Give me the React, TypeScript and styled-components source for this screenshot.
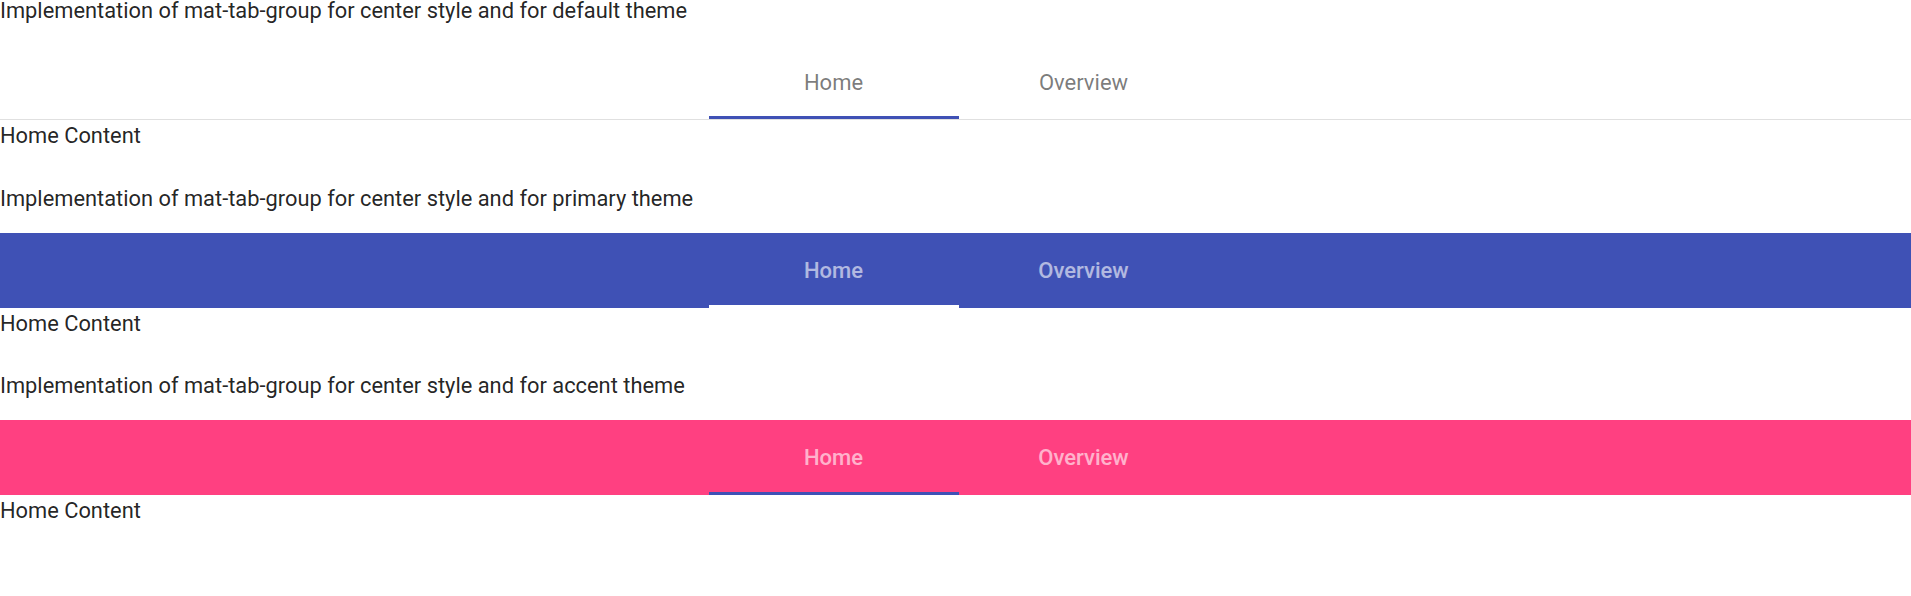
import React, { useState } from "react";
import styled, { createGlobalStyle, css } from "styled-components";

type Theme = "default" | "primary" | "accent";

const GlobalStyle = createGlobalStyle`
  html, body {
    margin: 0;
    padding: 0;
    background: #ffffff;
  }
  body {
    font-family: Roboto, "Helvetica Neue", "Liberation Sans", sans-serif;
    color: rgba(0, 0, 0, 0.87);
    font-size: 21.85px;
  }
`;

const Page = styled.div`
  display: flex;
  flex-direction: column;
  width: 100%;
`;

const Section = styled.section`
  display: flex;
  flex-direction: column;
  padding-bottom: 40.5px;
`;

const Title = styled.p`
  margin: 0;
  font-size: 21.85px;
  line-height: 22px;
  font-weight: 400;
  color: rgba(0, 0, 0, 0.87);
`;

const bgFor: Record<Theme, string> = {
  default: "transparent",
  primary: "#3f51b5",
  accent: "#ff4081",
};

const inkFor: Record<Theme, string> = {
  default: "#3f51b5",
  primary: "#ffffff",
  accent: "#3f51b5",
};

const Header = styled.div<{ $theme: Theme }>`
  margin-top: 23px;
  display: flex;
  justify-content: center;
  padding-left: 6px;
  background: ${(p) => bgFor[p.$theme]};
  ${(p) =>
    p.$theme === "default"
      ? css`
          height: 74px;
          border-bottom: 1px solid rgba(0, 0, 0, 0.12);
        `
      : css`
          height: 75px;
        `}
`;

const TabList = styled.div`
  display: flex;
  height: 100%;
`;

const Tab = styled.button<{ $theme: Theme; $active: boolean }>`
  position: relative;
  width: 250px;
  height: 100%;
  padding: 0 36px;
  border: none;
  background: transparent;
  cursor: pointer;
  font-family: Roboto, "Helvetica Neue", "Liberation Sans", sans-serif;
  font-size: 22px;
  font-weight: ${(p) => (p.$theme === "default" ? 400 : 500)};
  display: flex;
  align-items: center;
  justify-content: center;
  opacity: 0.6;
  color: ${(p) => (p.$theme === "default" ? "rgba(0, 0, 0, 0.87)" : "#ffffff")};
  outline: none;
`;

const InkBar = styled.span<{ $theme: Theme }>`
  position: absolute;
  left: 0;
  right: 0;
  bottom: 0;
  height: 3px;
  background: ${(p) => inkFor[p.$theme]};
`;

const InkWrap = styled.div`
  position: relative;
  display: flex;
  height: 100%;
`;

const Content = styled.div`
  margin-top: 5px;
  font-size: 21.85px;
  line-height: 22px;
  color: rgba(0, 0, 0, 0.87);
`;

const tabs = ["Home", "Overview"];

function TabGroup({ theme }: { theme: Theme }) {
  const [active, setActive] = useState(0);
  return (
    <>
      <Header $theme={theme}>
        <TabList role="tablist">
          {tabs.map((t, i) => (
            <InkWrap key={t}>
              <Tab
                role="tab"
                $theme={theme}
                $active={i === active}
                onClick={() => setActive(i)}
              >
                {t}
              </Tab>
              {i === active && <InkBar $theme={theme} />}
            </InkWrap>
          ))}
        </TabList>
      </Header>
      <Content>{tabs[active]} Content</Content>
    </>
  );
}

export default function App() {
  const themes: Theme[] = ["default", "primary", "accent"];
  return (
    <Page>
      <GlobalStyle />
      {themes.map((t) => (
        <Section key={t}>
          <Title>
            Implementation of mat-tab-group for center style and for {t} theme
          </Title>
          <TabGroup theme={t} />
        </Section>
      ))}
    </Page>
  );
}
